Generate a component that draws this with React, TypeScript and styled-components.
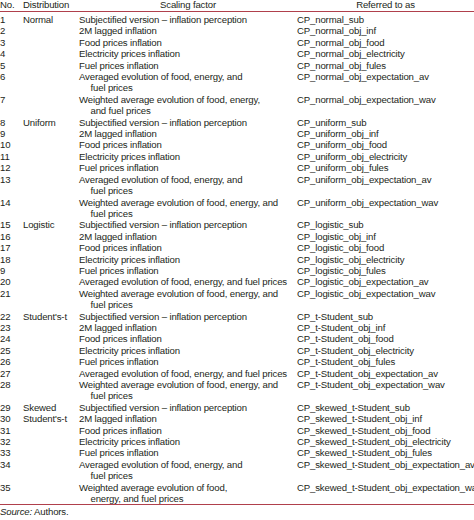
import React from "react";
import styled, { createGlobalStyle } from "styled-components";

type Row = {
  no: string;
  dist?: string;
  factor: string[];
  name: string;
};

const subj = "Subjectified version – inflation perception";
const lagged = "2M lagged inflation";
const food = "Food prices inflation";
const elec = "Electricity prices inflation";
const fuel = "Fuel prices inflation";

const group = (prefix: string): string[] => [
  `${prefix}_sub`,
  `${prefix}_obj_inf`,
  `${prefix}_obj_food`,
  `${prefix}_obj_electricity`,
  `${prefix}_obj_fules`,
  `${prefix}_obj_expectation_av`,
  `${prefix}_obj_expectation_wav`,
];

const n = group("CP_normal");
const u = group("CP_uniform");
const l = group("CP_logistic");
const t = group("CP_t-Student");
const s = group("CP_skewed_t-Student");

const rows: Row[] = [
  { no: "1", dist: "Normal", factor: [subj], name: n[0] },
  { no: "2", factor: [lagged], name: n[1] },
  { no: "3", factor: [food], name: n[2] },
  { no: "4", factor: [elec], name: n[3] },
  { no: "5", factor: [fuel], name: n[4] },
  { no: "6", factor: ["Averaged evolution of food, energy, and", "fuel prices"], name: n[5] },
  { no: "7", factor: ["Weighted average evolution of food, energy,", "and fuel prices"], name: n[6] },
  { no: "8", dist: "Uniform", factor: [subj], name: u[0] },
  { no: "9", factor: [lagged], name: u[1] },
  { no: "10", factor: [food], name: u[2] },
  { no: "11", factor: [elec], name: u[3] },
  { no: "12", factor: [fuel], name: u[4] },
  { no: "13", factor: ["Averaged evolution of food, energy, and", "fuel prices"], name: u[5] },
  { no: "14", factor: ["Weighted average evolution of food, energy, and", "fuel prices"], name: u[6] },
  { no: "15", dist: "Logistic", factor: [subj], name: l[0] },
  { no: "16", factor: [lagged], name: l[1] },
  { no: "17", factor: [food], name: l[2] },
  { no: "18", factor: [elec], name: l[3] },
  { no: "9", factor: [fuel], name: l[4] },
  { no: "20", factor: ["Averaged evolution of food, energy, and fuel prices"], name: l[5] },
  { no: "21", factor: ["Weighted average evolution of food, energy, and", "fuel prices"], name: l[6] },
  { no: "22", dist: "Student's-t", factor: [subj], name: t[0] },
  { no: "23", factor: [lagged], name: t[1] },
  { no: "24", factor: [food], name: t[2] },
  { no: "25", factor: [elec], name: t[3] },
  { no: "26", factor: [fuel], name: t[4] },
  { no: "27", factor: ["Averaged evolution of food, energy, and fuel prices"], name: t[5] },
  { no: "28", factor: ["Weighted average evolution of food, energy, and", "fuel prices"], name: t[6] },
  { no: "29", dist: "Skewed", factor: [subj], name: s[0] },
  { no: "30", dist: "Student's-t", factor: [lagged], name: s[1] },
  { no: "31", factor: [food], name: s[2] },
  { no: "32", factor: [elec], name: s[3] },
  { no: "33", factor: [fuel], name: s[4] },
  { no: "34", factor: ["Averaged evolution of food, energy, and", "fuel prices"], name: s[5] },
  { no: "35", factor: ["Weighted average evolution of food,", "energy, and fuel prices"], name: s[6] },
];

export default function App() {
  return (
    <>
      <GlobalStyle />
      <Table>
        <Head>
          <Cell>No.</Cell>
          <Cell>Distribution</Cell>
          <Cell $center>Scaling factor</Cell>
          <Cell $center>Referred to as</Cell>
        </Head>
        <Body>
          {rows.map((r, i) => (
            <Line key={i}>
              <Cell>{r.no}</Cell>
              <Cell>{r.dist}</Cell>
              <Cell>
                {r.factor.map((f, j) => (
                  <Wrap key={j} $cont={j > 0}>
                    {f}
                  </Wrap>
                ))}
              </Cell>
              <Cell>{r.name}</Cell>
            </Line>
          ))}
        </Body>
        <Source>
          <em>Source:</em> Authors.
        </Source>
      </Table>
    </>
  );
}

const GlobalStyle = createGlobalStyle`
  html, body {
    margin: 0;
    padding: 0;
    background: #fff;
    overflow: hidden;
  }
`;

const Table = styled.div`
  width: 474px;
  font-family: "Liberation Sans", Arial, sans-serif;
  font-size: 9.6px;
  letter-spacing: -0.15px;
  line-height: 11.4px;
  color: #231f20;
`;

const Head = styled.div`
  display: grid;
  grid-template-columns: 23px 56px 218px minmax(0, 1fr);
  height: 11px;
  line-height: 9px;
  border-bottom: 1px solid #b0404c;
`;

const Body = styled.div`
  padding-top: 2px;
  border-bottom: 1px solid #b0404c;
`;

const Line = styled.div`
  display: grid;
  grid-template-columns: 23px 56px 218px minmax(0, 1fr);
`;

const Cell = styled.div<{ $center?: boolean }>`
  white-space: nowrap;
  text-align: ${(p) => (p.$center ? "center" : "left")};
`;

const Wrap = styled.div<{ $cont?: boolean }>`
  padding-left: ${(p) => (p.$cont ? "11.5px" : "0")};
`;

const Source = styled.div`
  padding-top: 1px;
  em {
    font-style: italic;
  }
`;
